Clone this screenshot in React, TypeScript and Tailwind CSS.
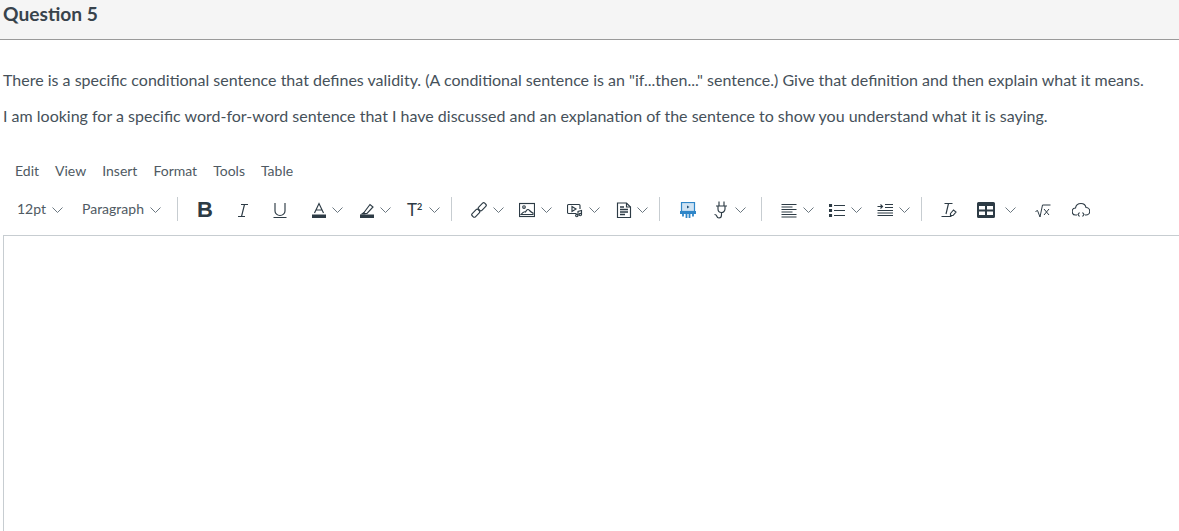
const ink = "#2d3b45";

function Chevron({ className = "" }: { className?: string }) {
  return (
    <svg viewBox="0 0 11 6" className={`w-[11px] h-[6px] flex-none translate-y-px ${className}`} fill="none" stroke="#6b7780" strokeWidth="1">
      <path d="M0.500 0.500 5.500 5.500 10.500 0.500" />
    </svg>
  );
}

function Sep({ className = "" }: { className?: string }) {
  return <div className={`w-px h-6 bg-[#c7cdd1] flex-none ${className}`} />;
}

function Icon({ children, className = "" }: { children: React.ReactNode; className?: string }) {
  return (
    <svg viewBox="0 0 16 16" className={`w-4 h-4 flex-none translate-y-px ${className}`} fill="none" stroke={ink} strokeWidth="1.150">
      {children}
    </svg>
  );
}

export default function App() {
  return (
    <div className="w-[1179px] h-[531px] overflow-hidden bg-white font-['Lato','Liberation_Sans',sans-serif] text-[#2d3b45]">
      {/* Question header */}
      <div className="h-10 bg-[#f5f5f5] border-b border-[#9a9a9a] pl-[3px] pt-[1px]">
        <h2 className="text-[19.200px] leading-[26px] font-bold text-[#38434c]">Question 5</h2>
      </div>

      {/* Prompt */}
      <div className="pl-[3px] pt-[28px] text-base leading-6 text-[#46515a]">
        <p>There is a specific conditional sentence that defines validity. (A conditional sentence is an "if...then..." sentence.) Give that definition and then explain what it means.</p>
        <p className="mt-3">I am looking for a specific word-for-word sentence that I have discussed and an explanation of the sentence to show you understand what it is saying.</p>
      </div>

      {/* Menu bar */}
      <div className="flex pl-[15px] mt-[33px] gap-4 text-sm leading-5 text-[#4f5a63]">
        <span>Edit</span>
        <span>View</span>
        <span>Insert</span>
        <span>Format</span>
        <span>Tools</span>
        <span>Table</span>
      </div>

      {/* Toolbar */}
      <div className="flex items-center h-6 mt-[16px] pl-[17px] text-sm text-[#4f5a63]">
        <span className="w-[35px]">12pt</span>
        <Chevron />
        <span className="ml-[19px] w-[68px]">Paragraph</span>
        <Chevron />
        <Sep className="ml-[16px]" />

        {/* Bold / italic / underline */}
        <span className="ml-[19px] w-[38px] translate-y-px text-[22px] font-bold font-['Liberation_Sans'] text-[#2d3b45]">B</span>
        <Icon className="mr-[21px]">
          <path d="M6 2.500h7M3 14.500h7M9.500 2.500l-3 12" />
        </Icon>
        <Icon className="mr-[23px]">
          <path d="M3 1v8a5 4.500 0 0 0 10 0V1M1.500 15.500h13" />
        </Icon>

        {/* Font colour */}
        <Icon>
          <path d="M3.500 11 8 1.500 12.500 11M5 8h6" />
          <rect x="1" y="12.500" width="14" height="3.500" fill={ink} stroke="none" />
        </Icon>
        <Chevron className="ml-[5px]" />

        {/* Highlight */}
        <Icon className="ml-[16px]">
          <path d="M5 10.500 11 2.500l3 2.500-6 6.500H5.500z" />
          <path d="M5 10.500 3 12h3.500" fill={ink} />
          <rect x="1" y="12.500" width="14" height="3.500" fill={ink} stroke="none" />
        </Icon>
        <Chevron className="ml-[5px]" />

        {/* Superscript */}
        <span className="ml-[16px] w-[22px] flex items-start translate-y-px text-[17px] leading-4 text-[#2d3b45]">
          T<span className="text-[9px] leading-[10px] font-bold">2</span>
        </span>
        <Chevron />
        <Sep className="ml-[11px]" />

        {/* Link */}
        <Icon className="ml-[19px]">
          <rect x="0.500" y="9" width="8.500" height="4.500" rx="1.500" transform="rotate(-45 4.750 11.250)" />
          <rect x="7" y="2.500" width="8.500" height="4.500" rx="1.500" transform="rotate(-45 11.250 4.750)" />
        </Icon>
        <Chevron className="ml-[6px]" />

        {/* Image */}
        <Icon className="ml-[15px]">
          <rect x="0.500" y="1.500" width="15" height="13" />
          <circle cx="5" cy="5" r="1.300" />
          <path d="M2 12.500c2-2.500 3-3.500 4.500-2.500 1.500-3 3-3 4-1.500 1 1 2 2 3.500 2.500v1.500z" />
        </Icon>
        <Chevron className="ml-[6px]" />

        {/* Media */}
        <Icon className="ml-[15px]">
          <path d="M9.500 11.500h-8a1 1 0 0 1-1-1v-7a1 1 0 0 1 1-1H12a1 1 0 0 1 1 1V7" />
          <path d="M5 4.500v5l4-2.500z" />
          <path d="M11 13.500V9.500l3.500-1v4" />
          <circle cx="9.800" cy="13.500" r="1.200" />
          <circle cx="13.300" cy="12.500" r="1.200" />
        </Icon>
        <Chevron className="ml-[6px]" />

        {/* Document */}
        <Icon className="ml-[16px]">
          <path d="M1.500 1h9L14.500 5v10.500h-13z" />
          <path d="M10.500 1v4h4" />
          <path d="M4 5h4M4 7.500h8M4 10h8M4 12.500h5" strokeWidth="1.300" />
        </Icon>
        <Chevron className="ml-[5px]" />
        <Sep className="ml-[11px]" />

        {/* External tool */}
        <svg viewBox="0 0 16 16" className="ml-[20px] w-4 h-4 flex-none translate-y-px" fill="#2f86c8" stroke="#2f86c8" strokeWidth="1.200">
          <rect x="1.500" y="0.500" width="13" height="9" fill="#cfe3f3" />
          <path d="M7 3.500v3l2.500-1.500z" fill="#1f4f78" stroke="none" />
          <rect x="0" y="9" width="16" height="3" stroke="none" />
          <path d="M3 11.500v3M6.500 11.500v4.500M9.500 11.500v4.500M13 11.500v3" strokeWidth="1.800" />
        </svg>

        {/* Apps plug */}
        <svg viewBox="0 0 16 18" className="ml-[17px] w-4 h-[18px] flex-none translate-y-px" fill="none" stroke={ink} strokeWidth="1.150">
          <path d="M6 .500v4.500M11 .500v4.500M3 5h11M5 5v3a3.500 3.500 0 0 0 7 0V5M8.500 11.500v2.500c0 1.500-1 3-2.500 3s-2-1-2.300-2c-.3-1-1-1.500-2.200-1.500" />
        </svg>
        <Chevron className="ml-[6px]" />
        <Sep className="ml-[15px]" />

        {/* Align */}
        <Icon className="ml-[19px]">
          <path d="M0.500 2.500h15M0.500 5h11M0.500 7.500h15M0.500 10h11M0.500 12.500h15M0.500 15h15" />
        </Icon>
        <Chevron className="ml-[6px]" />

        {/* List */}
        <Icon className="ml-[15px]">
          <path d="M5 3.500h11M5 8.500h11M5 13.500h11" />
          <path d="M0.500 2.500h2v2h-2zM0.500 7.500h2v2h-2zM0.500 12.500h2v2h-2z" fill={ink} />
        </Icon>
        <Chevron className="ml-[6px]" />

        {/* Indent */}
        <Icon className="ml-[15px]">
          <path d="M0.500 4.500h5M3.500 2.500l2 2-2 2" />
          <path d="M8 2.500h8M8 5.500h8M0.500 8.500h15.500M0.500 11h15.500M0.500 13.500h15.500" />
        </Icon>
        <Chevron className="ml-[6px]" />
        <Sep className="ml-[11px]" />

        {/* Clear formatting */}
        <Icon className="ml-[19px]">
          <path d="M3.500 1.500h8M7.500 1.500 5 12M0.500 14.500h10" />
          <path d="M9.500 11.500l3-3.500 2.500 2-3 3.500h-2.500z" />
        </Icon>

        {/* Table */}
        <svg viewBox="0 0 18 16" className="ml-[20px] w-[18px] h-4 flex-none translate-y-px">
          <path fillRule="evenodd" fill={ink} d="M1.500 0h15A1.500 1.500 0 0 1 18 1.500v13a1.500 1.500 0 0 1-1.500 1.500h-15A1.500 1.500 0 0 1 0 14.500v-13A1.500 1.500 0 0 1 1.500 0zM2 4v3.500h6V4zM10 4v3.500h6V4zM2 9.500V13h6V9.500zM10 9.500V13h6V9.500z" />
        </svg>
        <Chevron className="ml-[10px]" />

        {/* Equation */}
        <svg viewBox="0 0 16 16" className="ml-[19px] w-4 h-4 flex-none translate-y-px" fill="none" stroke={ink} strokeWidth="1">
          <path d="M0.500 9.500 2.500 8.500 5 15 7.500 3H15.500" />
          <path d="M9 7l5 6M14 7l-5 6" />
        </svg>

        {/* Embed cloud */}
        <svg viewBox="0 0 18 16" className="ml-[21px] w-[18px] h-4 flex-none translate-y-px" fill="none" stroke={ink} strokeWidth="1.150">
          <path d="M5 13H4a3.500 3.500 0 0 1-.500-7C4 3 6.500 1.500 9 1.500c2.500 0 4.500 1.500 5 4a3.500 3.500 0 0 1 0 7.500h-1" />
          <path d="M7.500 10.500 6 12.500 7.500 14.500M10.500 10.500 12 12.500 10.500 14.500" />
        </svg>
      </div>

      {/* Editor area */}
      <div className="h-[400px] mt-[14px] ml-[3px] border-t border-l border-[#c7cdd1]" />
    </div>
  );
}
